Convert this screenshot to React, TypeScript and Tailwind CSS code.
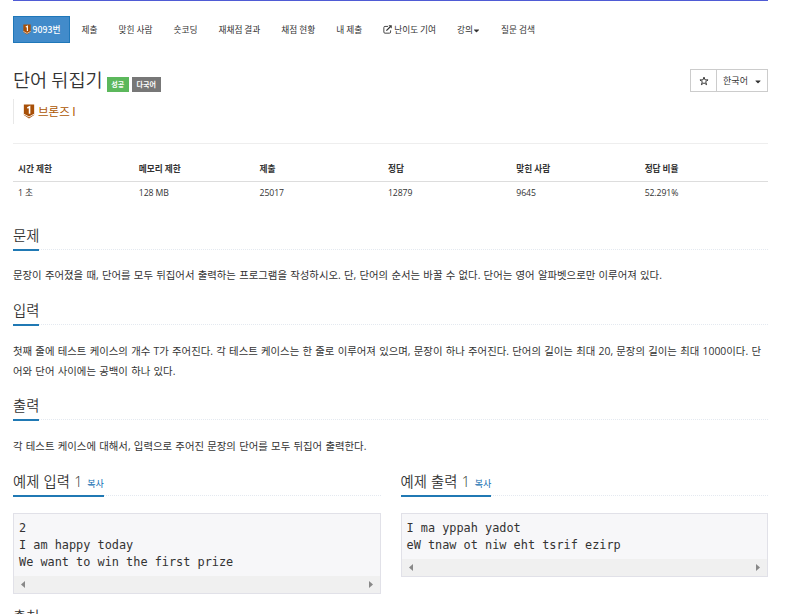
import React from 'react';
import { FaCaretDown } from 'react-icons/fa';

const LIMITS = [
  { label: '시간 제한', value: '1 초' },
  { label: '메모리 제한', value: '128 MB' },
  { label: '제출', value: '25017' },
  { label: '정답', value: '12879' },
  { label: '맞힌 사람', value: '9645' },
  { label: '정답 비율', value: '52.291%' },
];

const TierBadge = ({ className }: { className: string }) => (
  <svg viewBox="0 0 12 16" className={className}>
    <path d="M0.5 0.5h11v11.2L6 15.5 0.5 11.7z" fill="#a85008" />
    <path d="M0.5 10.8 6 13.8l5.5-3" fill="none" stroke="#fff" strokeWidth="0.9" />
    <path d="M4.2 4.2 6.6 3v7.4" fill="none" stroke="#fff" strokeWidth="1.7" />
  </svg>
);

const ExternalIcon = () => (
  <svg viewBox="0 0 16 16" className="h-[9px] w-[9px]" fill="none" stroke="#333" strokeWidth="1.6">
    <path d="M9 2.5H3.5a2 2 0 0 0-2 2v8a2 2 0 0 0 2 2h8a2 2 0 0 0 2-2V9.5" />
    <path d="M6 10 13 3" strokeWidth="2.2" />
    <path d="M9.8 0.5h5.7v5.7z" fill="#333" stroke="none" />
  </svg>
);

const StarIcon = () => (
  <svg viewBox="0 0 20 20" className="h-[10px] w-[10px]" fill="none" stroke="#222" strokeWidth="1.8">
    <path d="m10 2.2 2.1 5.6h6L13.3 11.4l1.9 6L10 13.8l-5.2 3.6 1.9-6L1.9 7.8h6z" />
  </svg>
);

const Nav = () => (
  <nav className="flex h-[27px] items-center text-[8.7px] text-[#333]">
    <div className="flex h-[27px] w-[57px] items-center justify-center gap-[2px] border border-[#1f77b9] bg-[#428bca] font-medium text-white">
      <TierBadge className="h-[11px] w-[8px]" />
      9093번
    </div>
    <span className="ml-[11.5px]">제출</span>
    <span className="ml-[21px]">맞힌 사람</span>
    <span className="ml-[21px]">숏코딩</span>
    <span className="ml-[21px]">재채점 결과</span>
    <span className="ml-[21px]">채점 현황</span>
    <span className="ml-[21px]">내 제출</span>
    <span className="ml-[21px] flex items-center gap-[2px]">
      <ExternalIcon />
      난이도 기여
    </span>
    <span className="ml-[21px] flex items-center">
      강의
      <FaCaretDown className="mt-[2px] h-[9px] w-[7px]" />
    </span>
    <span className="ml-[21px]">질문 검색</span>
  </nav>
);

const Heading = ({ title, copy = false }: { title: string; copy?: boolean }) => (
  <div className="flex h-[26px] border-b border-dotted border-[#e4e9f0]">
    <h2 className="-mb-[2px] flex h-[27px] items-baseline border-b-2 border-[#2079b4] font-['Open_Sans','Noto_Sans_CJK_KR',sans-serif] text-[14.3px] leading-[24px] font-[350] whitespace-nowrap text-[#333]">
      {title}
      {copy && <span className="ml-[5px] text-[9px] font-normal text-[#0f6cb0]">복사</span>}
    </h2>
  </div>
);

const Sample = ({ title, lines }: { title: string; lines: string[] }) => (
  <div>
    <Heading title={title} copy />
    <div className="mt-[17px] border border-[#e1e1e8] bg-[#f7f7f9]">
      <pre className="px-[5px] pt-[6px] pb-[5px] font-['DejaVu_Sans_Mono',monospace] text-[11.87px] leading-[17px] text-[#333] [word-spacing:0]">
        {lines.join('\n')}
      </pre>
      <div className="flex h-[17px] items-center justify-between bg-[#f0f0f0] px-[7px]">
        <svg viewBox="0 0 4 7" className="h-[7px] w-[4px]">
          <path d="M4 0v7L0 3.5z" fill="#888" />
        </svg>
        <svg viewBox="0 0 4 7" className="h-[7px] w-[4px]">
          <path d="M0 0v7l4-3.5z" fill="#888" />
        </svg>
      </div>
    </div>
  </div>
);

export default function App() {
  return (
    <div className="h-[614px] overflow-hidden bg-white pr-8 pl-[13px] font-['Noto_Sans_CJK_KR',sans-serif]">
      <div className="h-px bg-[#4f5bd5]" />
      <div className="pt-[15px]">
        <Nav />
      </div>

      <header className="mt-[24px] flex justify-between">
        <div className="flex h-[28px] items-center">
          <h1 className="-mt-[4px] text-[18.6px] leading-[28px] font-[350] text-[#333]">단어 뒤집기</h1>
          <span className="mt-[7px] ml-[4px] flex h-[15px] w-[22px] items-center justify-center bg-[#5cb85c] text-[7px] font-bold text-white">
            성공
          </span>
          <span className="mt-[7px] ml-[3px] flex h-[15px] w-[29px] items-center justify-center bg-[#777] text-[7px] font-bold text-white">
            다국어
          </span>
        </div>
        <div className="mt-[2px] flex h-[23px] border border-[#ccc] text-[9px] text-[#333]">
          <span className="flex w-[26px] items-center justify-center border-r border-[#ccc]">
            <StarIcon />
          </span>
          <span className="flex w-[50px] items-center justify-center gap-[7px]">
            한국어
            <FaCaretDown className="mt-px h-[9px] w-[6px]" />
          </span>
        </div>
      </header>

      <div className="mt-[4px] flex h-[25px] items-center gap-[3px] border-l border-[#e8e8e8] pl-[9px] text-[11.5px] text-[#ad5600]">
        <TierBadge className="h-[15px] w-[12px]" />
        브론즈 I
      </div>

      <hr className="mt-[19px] border-[#eee]" />

      <table className="mt-[13px] w-full table-fixed text-left text-[8.7px] text-[#333]">
        <colgroup>
          <col className="w-[16%]" />
          <col className="w-[16%]" />
          <col className="w-[17%]" />
          <col className="w-[17%]" />
          <col className="w-[17%]" />
          <col className="w-[17%]" />
        </colgroup>
        <thead>
          <tr className="h-[24px] border-b border-[#ddd]">
            {LIMITS.map((item) => (
              <th key={item.label} className="px-[5px] py-0 font-bold">
                {item.label}
              </th>
            ))}
          </tr>
        </thead>
        <tbody>
          <tr className="h-[23px] font-['Open_Sans','Noto_Sans_CJK_KR',sans-serif]">
            {LIMITS.map((item) => (
              <td key={item.label} className="px-[5px] pt-px pb-0 tracking-[-0.1px]">
                {item.value}
              </td>
            ))}
          </tr>
        </tbody>
      </table>

      <main className="mt-[20px] font-['Open_Sans','Noto_Sans_CJK_KR',sans-serif] text-[10.4px] leading-[20px] text-[#333] [word-spacing:0.55px]">
        <Heading title="문제" />
        <p className="mt-[15px] whitespace-nowrap">
          문장이 주어졌을 때, 단어를 모두 뒤집어서 출력하는 프로그램을 작성하시오. 단, 단어의 순서는 바꿀 수 없다. 단어는 영어 알파벳으로만 이루어져 있다.
        </p>
        <div className="mt-[14px]">
          <Heading title="입력" />
        </div>
        <p className="mt-[16px] whitespace-nowrap">
          첫째 줄에 테스트 케이스의 개수 T가 주어진다. 각 테스트 케이스는 한 줄로 이루어져 있으며, 문장이 하나 주어진다. 단어의 길이는 최대 20, 문장의 길이는 최대 1000이다. 단
          <br />
          어와 단어 사이에는 공백이 하나 있다.
        </p>
        <div className="mt-[13px]">
          <Heading title="출력" />
        </div>
        <p className="mt-[16px] whitespace-nowrap">
          각 테스트 케이스에 대해서, 입력으로 주어진 문장의 단어를 모두 뒤집어 출력한다.
        </p>
        <div className="mt-[14px] grid grid-cols-2 items-start gap-5">
          <Sample
            title="예제 입력 1"
            lines={['2', 'I am happy today', 'We want to win the first prize']}
          />
          <Sample
            title="예제 출력 1"
            lines={['I ma yppah yadot', 'eW tnaw ot niw eht tsrif ezirp']}
          />
        </div>
        <div className="mt-[11px]">
          <Heading title="출처" />
        </div>
      </main>
    </div>
  );
}
